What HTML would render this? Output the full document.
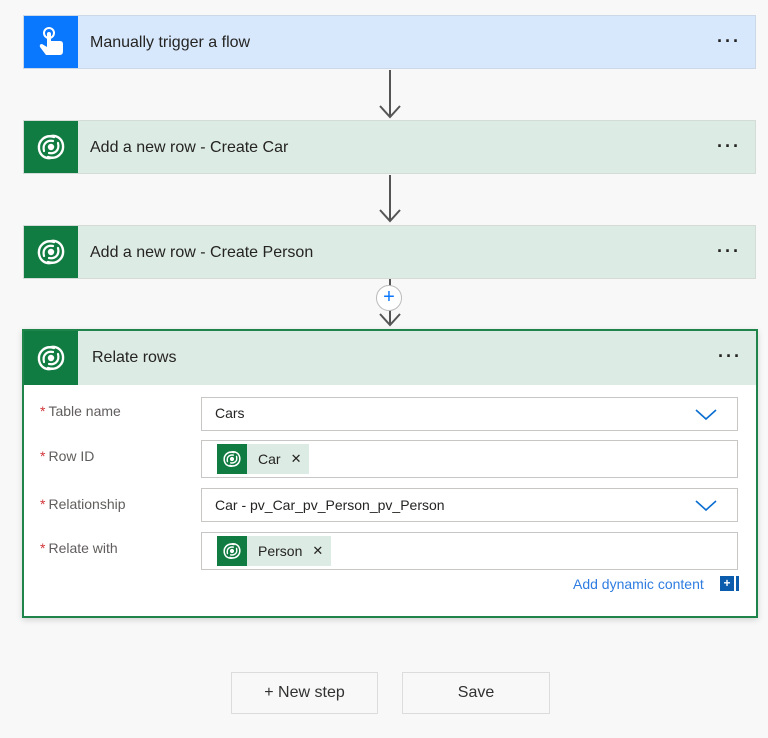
<!DOCTYPE html>
<html><head><meta charset="utf-8"><style>
body{margin:0;width:768px;height:738px;background:#f8f8f8;font-family:"Liberation Sans",sans-serif;color:#252423;position:relative;overflow:hidden}
.a{position:absolute}
.card{position:absolute;left:23px;width:733px;height:54px;border:1px solid #d4dcd8;box-sizing:border-box}
.ic{position:absolute;left:0;top:0;width:54px;height:100%;display:flex;align-items:center;justify-content:center}
.t{position:absolute;left:66px;top:0;line-height:54px;font-size:16px}
.dots{position:absolute;right:14px;top:0;line-height:50px;font-size:18px;letter-spacing:2px;font-weight:bold}
.line{position:absolute;left:389px;width:2px;background:#555}
.lab{position:absolute;left:40px;font-size:14px;color:#605e5c}
.lab b{color:#d13438;font-weight:normal;margin-right:3px}
.in{position:absolute;left:201px;width:537px;border:1px solid #c8c6c4;box-sizing:border-box;background:#fff;font-size:14px}
.tok{position:absolute;left:15px;top:3px;height:30px;background:#dcebe3;display:flex;align-items:center;font-size:14px}
.tok i{width:30px;height:30px;background:#107c41;display:flex;align-items:center;justify-content:center;margin-right:11px}
.btn{position:absolute;top:672px;height:42px;border:1px solid #dcdcdc;box-sizing:border-box;background:#f8f8f8;text-align:center;line-height:40px;font-size:16px;color:#323130}
</style></head><body>
<svg width="0" height="0" style="position:absolute"><defs><g id="dv">
<path d="M3,-10 C-6,-13 -13,-6 -12,2 C-11,9 -5,12 0,11" fill="none" stroke="#fff" stroke-width="2.4" stroke-linecap="round"/>
<path d="M-3,10 C6,13 13,6 12,-2 C11,-9 5,-12 0,-11" fill="none" stroke="#fff" stroke-width="2.4" stroke-linecap="round"/>
<path d="M-7,4 C-9,-4 -3,-7 2,-6" fill="none" stroke="#fff" stroke-width="2.2" stroke-linecap="round"/>
<path d="M7,-4 C9,4 3,7 -2,6" fill="none" stroke="#fff" stroke-width="2.2" stroke-linecap="round"/>
<circle cx="0" cy="0" r="3.2" fill="#fff"/></g></defs></svg>

<div class="card" style="top:15px;background:#d7e8fc;border-color:#cdd8e6"><div class="ic" style="background:#0a77ff"><svg width="30" height="34" viewBox="0 0 30 34"><circle cx="13" cy="8" r="5" fill="none" stroke="#fff" stroke-width="2"/><path d="M11 9 V22 L6 19 Q3 19 4 22 L10 30 H24 Q27 30 27 26 V19 Q27 16 24 16 H15 V9 Q15 7 13 7 Q11 7 11 9Z" fill="#fff"/></svg></div><div class="t">Manually trigger a flow</div><div class="dots">···</div></div>
<div class="line" style="top:70px;height:46px"></div>
<svg class="a" style="left:378px;top:104px" width="24" height="16"><path d="M2 2 L12 13 L22 2" fill="none" stroke="#555" stroke-width="2"/></svg>

<div class="card" style="top:120px;background:#dcebe3"><div class="ic" style="background:#107c41"><svg width="34" height="34" viewBox="-17 -17 34 34"><use href="#dv"/></svg></div><div class="t">Add a new row - Create Car</div><div class="dots">···</div></div>
<div class="line" style="top:175px;height:46px"></div>
<svg class="a" style="left:378px;top:208px" width="24" height="16"><path d="M2 2 L12 13 L22 2" fill="none" stroke="#555" stroke-width="2"/></svg>

<div class="card" style="top:225px;background:#dcebe3"><div class="ic" style="background:#107c41"><svg width="34" height="34" viewBox="-17 -17 34 34"><use href="#dv"/></svg></div><div class="t">Add a new row - Create Person</div><div class="dots">···</div></div>
<div class="line" style="top:279px;height:46px"></div>
<svg class="a" style="left:378px;top:312px" width="24" height="16"><path d="M2 2 L12 13 L22 2" fill="none" stroke="#555" stroke-width="2"/></svg>
<div class="a" style="left:376px;top:285px;width:26px;height:26px;border-radius:50%;background:#fff;border:1px solid #bbb;box-sizing:border-box;text-align:center;line-height:22px;color:#0a77ff;font-size:20px">+</div>

<div class="a" style="left:22px;top:329px;width:736px;height:289px;border:2px solid #1e8449;box-sizing:border-box;background:#fff;box-shadow:0 2px 6px rgba(0,0,0,.15)">
<div class="a" style="left:0;top:0;right:0;height:54px;background:#dcebe3"><div class="ic" style="background:#107c41"><svg width="34" height="34" viewBox="-17 -17 34 34"><use href="#dv"/></svg></div><div class="t" style="left:68px">Relate rows</div><div class="dots">···</div></div>
</div>

<div class="lab" style="top:403px"><b>*</b>Table name</div>
<div class="in" style="top:397px;height:34px;padding:7px 13px">Cars<svg class="a" style="right:20px;top:11px" width="22" height="12"><path d="M1 1 L11 10 L21 1" fill="none" stroke="#0a6ed1" stroke-width="1.6"/></svg></div>
<div class="lab" style="top:448px"><b>*</b>Row ID</div>
<div class="in" style="top:440px;height:38px"><div class="tok"><i><svg width="22" height="22" viewBox="-17 -17 34 34"><use href="#dv"/></svg></i>Car<span style="margin:0 8px 0 10px;font-size:13px">✕</span></div></div>
<div class="lab" style="top:496px"><b>*</b>Relationship</div>
<div class="in" style="top:488px;height:34px;padding:8px 13px">Car - pv_Car_pv_Person_pv_Person<svg class="a" style="right:20px;top:11px" width="22" height="12"><path d="M1 1 L11 10 L21 1" fill="none" stroke="#0a6ed1" stroke-width="1.6"/></svg></div>
<div class="lab" style="top:540px"><b>*</b>Relate with</div>
<div class="in" style="top:532px;height:38px"><div class="tok"><i><svg width="22" height="22" viewBox="-17 -17 34 34"><use href="#dv"/></svg></i>Person<span style="margin:0 8px 0 10px;font-size:13px">✕</span></div></div>
<div class="a" style="left:573px;top:576px;font-size:14px;color:#2f7de1">Add dynamic content</div>
<div class="a" style="left:720px;top:576px;width:14px;height:15px;background:#0b5cad;color:#fff;font-size:12px;text-align:center;line-height:15px;font-weight:bold">+</div>
<div class="a" style="left:736px;top:576px;width:3px;height:15px;background:#0b5cad"></div>

<div class="btn" style="left:231px;width:147px">+ New step</div>
<div class="btn" style="left:402px;width:148px">Save</div>
</body></html>
